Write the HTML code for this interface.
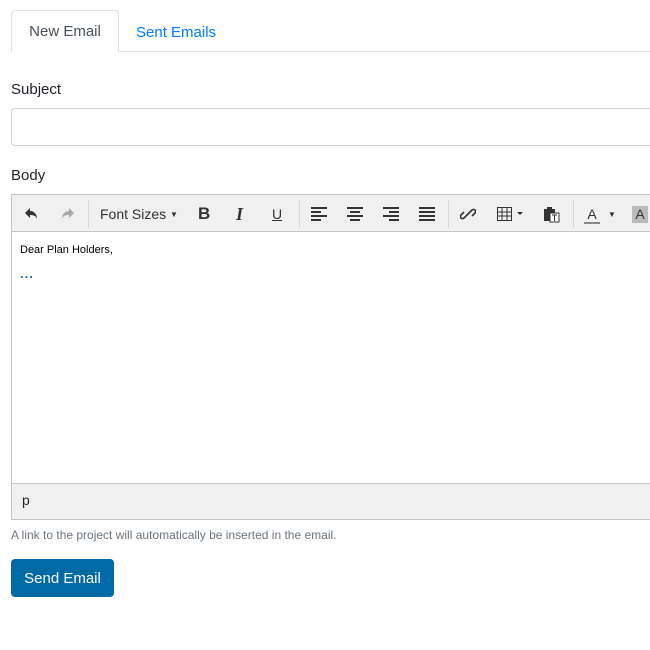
<!DOCTYPE html>
<html><head><style>
*{box-sizing:border-box;margin:0;padding:0}
body{width:650px;height:650px;overflow:hidden;background:#fff;font-family:"Liberation Sans",sans-serif;color:#212529;position:relative}
.a{position:absolute}
.ic{position:absolute;top:0;height:38px;display:flex;align-items:center;justify-content:center;color:#333}
.sep{position:absolute;top:5px;width:1px;height:28px;background:#d9d9d9}
</style></head><body>
<div class="a" style="left:11px;top:51px;width:650px;height:1px;background:#dee2e6"></div>
<div class="a" style="left:11px;top:10px;width:108px;height:42px;border:1px solid #dee2e6;border-bottom:none;background:#fff;border-radius:4px 4px 0 0;font-size:15px;color:#495057;text-align:center;line-height:42px">New Email</div>
<div class="a" style="left:136px;top:24px;font-size:15px;color:#007bff">Sent Emails</div>
<div class="a" style="left:11px;top:81px;font-size:15px">Subject</div>
<div class="a" style="left:11px;top:108px;width:660px;height:38px;border:1px solid #ced4da;border-radius:4px"></div>
<div class="a" style="left:11px;top:167px;font-size:15px">Body</div>
<div class="a" style="left:11px;top:194px;width:660px;height:326px;border:1px solid #c5c5c5">
 <div class="a" style="left:0;top:0;width:100%;height:37px;background:#f0f0f0;border-bottom:1px solid #c5c5c5">
  <div class="ic" style="left:8px;width:24px"><svg width="16" height="14" viewBox="0 0 16 14"><path d="M6 1 L1 6 L6 11 V8 C10 8 12 9 13 12 C13 7 10 4 6 4Z" fill="#333"/></svg></div>
  <div class="ic" style="left:43px;width:24px"><svg width="16" height="14" viewBox="0 0 16 14"><path d="M10 1 L15 6 L10 11 V8 C6 8 4 9 3 12 C3 7 6 4 10 4Z" fill="#aaa"/></svg></div>
  <div class="sep" style="left:76px"></div>
  <div class="ic" style="left:88px;font-size:14px">Font Sizes&nbsp;<span style="font-size:8px">▼</span></div>
  <div class="ic" style="left:186px;font-weight:bold;font-size:17px">B</div>
  <div class="ic" style="left:224px;font-style:italic;font-family:'Liberation Serif';font-size:18px;font-weight:bold">I</div>
  <div class="ic" style="left:260px;font-size:14px;text-decoration:underline">U</div>
  <div class="sep" style="left:287px"></div>
  <svg class="a" style="left:299px;top:12px" width="16" height="14"><path d="M0 1h16M0 5h10M0 9h16M0 13h10" stroke="#333" stroke-width="2"/></svg>
  <svg class="a" style="left:335px;top:12px" width="16" height="14"><path d="M0 1h16M3 5h10M0 9h16M3 13h10" stroke="#333" stroke-width="2"/></svg>
  <svg class="a" style="left:371px;top:12px" width="16" height="14"><path d="M0 1h16M6 5h10M0 9h16M6 13h10" stroke="#333" stroke-width="2"/></svg>
  <svg class="a" style="left:407px;top:12px" width="16" height="14"><path d="M0 1h16M0 5h16M0 9h16M0 13h16" stroke="#333" stroke-width="2"/></svg>
  <div class="sep" style="left:436px"></div>
  <svg class="a" style="left:448px;top:11px" width="16" height="16"><path d="M7 9l-3 3a2 2 0 0 1-3-3l3-3M9 7l3-3a2 2 0 0 1 3 3l-3 3M6 10l4-4" stroke="#333" stroke-width="1.6" fill="none"/></svg>
  <svg class="a" style="left:485px;top:12px" width="30" height="14"><path d="M.5 .5h14v13H.5zM.5 5h14M.5 9h14M5 .5v13M10 .5v13" stroke="#333" fill="none"/><path d="M20 5h6l-3 3z" fill="#333"/></svg>
  <svg class="a" style="left:532px;top:11px" width="16" height="17"><rect x="0" y="3" width="11" height="12" fill="#333"/><rect x="3" y="1" width="5" height="3" fill="#333"/><rect x="6" y="7" width="9" height="9" fill="#fff" stroke="#333"/><path d="M8 9h5M10.5 9v6" stroke="#333"/></svg>
  <div class="sep" style="left:561px"></div>
  <div class="ic" style="left:571px;width:18px;font-size:14px">A</div>
  <div class="a" style="left:572px;top:27px;width:16px;height:2px;background:#888"></div>
  <div class="ic" style="left:596px;font-size:8px">▼</div>
  <div class="a" style="left:620px;top:11px;width:16px;height:17px;background:#bbb;font-size:14px;text-align:center;line-height:17px;color:#333">A</div>
 </div>
 <div class="a" style="left:8px;top:49px;font-size:11px;color:#000">Dear Plan Holders,</div>
 <div class="a" style="left:8px;top:71px;font-size:13px;font-weight:bold;color:#1f6fb2;letter-spacing:1px">...</div>
 <div class="a" style="left:0;top:288px;width:100%;height:36px;background:#f0f0f0;border-top:1px solid #c5c5c5;font-size:14px;padding:8px 10px">p</div>
</div>
<div class="a" style="left:11px;top:528px;font-size:12px;color:#6c757d">A link to the project will automatically be inserted in the email.</div>
<div class="a" style="left:11px;top:559px;width:103px;height:38px;background:#006aa6;border-radius:4px;color:#fff;font-size:15px;text-align:center;line-height:39px">Send Email</div>
</body></html>
